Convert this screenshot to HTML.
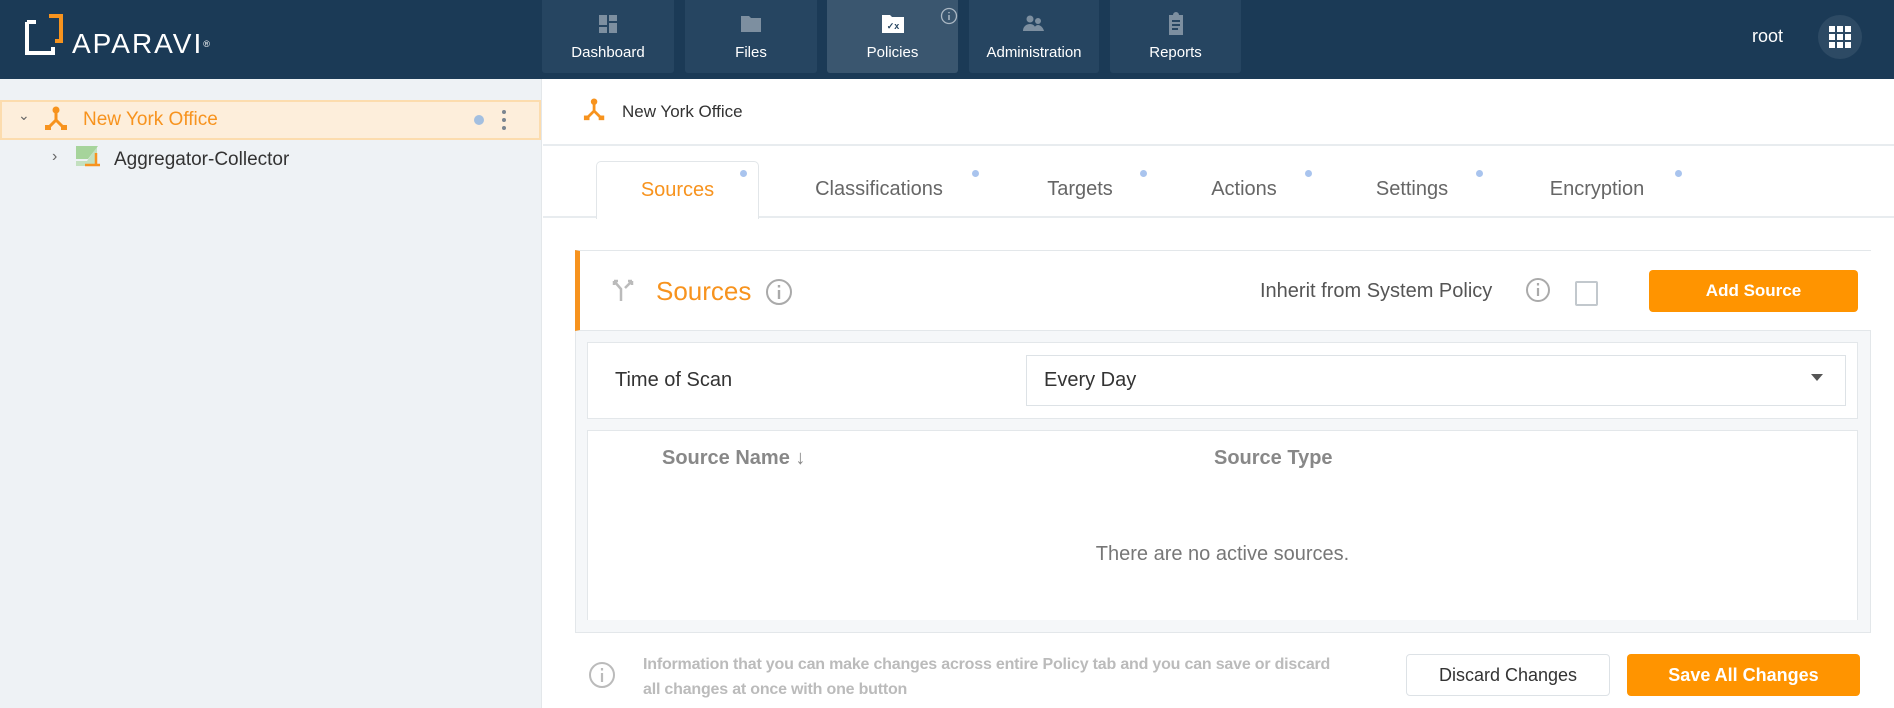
<!DOCTYPE html>
<html><head><meta charset="utf-8"><style>
*{box-sizing:border-box;margin:0;padding:0}
body{width:1894px;height:708px;overflow:hidden;font-family:"Liberation Sans",sans-serif;background:#fff;position:relative}
.a{position:absolute}
.hdr{left:0;top:0;width:1894px;height:79px;background:#1b3a56}
.nav{top:0;height:73px;background:#264561;border-radius:0 0 3px 3px;color:#fff;font-size:15px;text-align:center}
.nav span{position:absolute;left:0;right:0;top:44px}
.nav svg{position:absolute;left:50%;top:12px;margin-left:-12px}
.side{left:0;top:79px;width:542px;height:629px;background:#eef2f5;border-right:1px solid #e3e7ea}
.tab{top:161px;height:56px;font-size:20px;color:#666;text-align:center;line-height:56px}
.dot{width:7px;height:7px;border-radius:50%;background:#a9c4ee;top:170px}
.t{color:#555}
</style></head><body>
<div class="a hdr"></div>
<svg class="a" style="left:24px;top:14px" width="40" height="42" viewBox="0 0 40 42">
<path d="M3 8 V39 H29 V33" fill="none" stroke="#fff" stroke-width="4"/>
<path d="M3 8 H12" fill="none" stroke="#fff" stroke-width="4"/>
<path d="M25 2 H37 V27 H31" fill="none" stroke="#f7931e" stroke-width="4"/>
</svg>
<div class="a" style="left:72px;top:30px;color:#fff;font-size:28px;letter-spacing:2px;line-height:28px">APARAVI<sup style="font-size:9px;vertical-align:top;font-weight:normal">®</sup></div>

<div class="a nav" style="left:542px;width:132px"><svg width="24" height="24" viewBox="0 0 24 24"><path d="M3 3h8v10H3zM13 3h8v6h-8zM13 11h8v10h-8zM3 15h8v6H3z" fill="#7d8fa0"/></svg><span>Dashboard</span></div>
<div class="a nav" style="left:685px;width:132px"><svg width="24" height="24" viewBox="0 0 24 24"><path d="M2 4h8l2 2h10v14H2z" fill="#7d8fa0"/></svg><span>Files</span></div>
<div class="a nav" style="left:827px;width:131px;background:#3a566f"><svg width="24" height="24" viewBox="0 0 24 24"><path d="M1 3h8l2 2h12v16H1z" fill="#fff"/><text x="12" y="17" font-size="9" font-weight="bold" fill="#264561" text-anchor="middle" font-family="Liberation Sans">✓x</text></svg><span>Policies</span>
<svg class="a" style="left:113px;top:7px;margin:0" width="18" height="18" viewBox="0 0 18 18"><circle cx="9" cy="9" r="7.5" fill="none" stroke="#aab7c3" stroke-width="1.3"/><path d="M9 8v5M9 5v1.3" stroke="#aab7c3" stroke-width="1.5"/></svg></div>
<div class="a nav" style="left:969px;width:130px"><svg width="24" height="24" viewBox="0 0 24 24"><circle cx="8" cy="7" r="3.5" fill="#7d8fa0"/><circle cx="16" cy="9" r="3" fill="#7d8fa0"/><path d="M1 19c0-5 4-7 7-7s6 2 6 7zM11 19c1-4 3-6 5-6s5 2 6 6z" fill="#7d8fa0"/></svg><span>Administration</span></div>
<div class="a nav" style="left:1110px;width:131px"><svg width="24" height="24" viewBox="0 0 24 24"><path d="M5 3h4a3 3 0 0 1 6 0h4v20H5z" fill="#7d8fa0"/><path d="M8 9h8M8 13h8M8 17h6" stroke="#264561" stroke-width="2"/></svg><span>Reports</span></div>
<div class="a" style="left:1752px;top:26px;color:#fff;font-size:18px">root</div>
<div class="a" style="left:1818px;top:15px;width:44px;height:44px;border-radius:50%;background:#2d4a64"></div>
<svg class="a" style="left:1829px;top:26px" width="22" height="22" viewBox="0 0 22 22" fill="#fff"><rect x="0" y="0" width="6" height="6"/><rect x="8" y="0" width="6" height="6"/><rect x="16" y="0" width="6" height="6"/><rect x="0" y="8" width="6" height="6"/><rect x="8" y="8" width="6" height="6"/><rect x="16" y="8" width="6" height="6"/><rect x="0" y="16" width="6" height="6"/><rect x="8" y="16" width="6" height="6"/><rect x="16" y="16" width="6" height="6"/></svg>

<div class="a side"></div>
<div class="a" style="left:0;top:100px;width:541px;height:40px;background:#fdeedb;border:2px solid #fcdcae"></div>
<div class="a" style="left:18px;top:107px;color:#666;font-size:14px">⌄</div>
<svg class="a" style="left:44px;top:106px" width="26" height="26" viewBox="0 0 26 26"><circle cx="12" cy="4" r="3.5" fill="#f7931e"/><path d="M12 6v8L5 21M12 14l7 7" stroke="#f7931e" stroke-width="3" fill="none"/><rect x="1" y="19" width="6" height="5" fill="#f7931e"/><rect x="17" y="19" width="6" height="5" fill="#f7931e"/></svg>
<div class="a" style="left:83px;top:109px;color:#f7931e;font-size:19px">New York Office</div>
<div class="a" style="left:474px;top:115px;width:10px;height:10px;border-radius:50%;background:#a3bfe0"></div>
<div class="a" style="left:502px;top:110px;width:4px;height:4px;border-radius:50%;background:#7a8590;box-shadow:0 8px 0 #7a8590,0 16px 0 #7a8590"></div>
<div class="a" style="left:52px;top:148px;color:#666;font-size:16px">›</div>
<svg class="a" style="left:75px;top:145px" width="26" height="24" viewBox="0 0 26 24"><path d="M1 1h22L13 14H1z" fill="#a6d49b"/><path d="M1 16h11L22 2v19H1z" fill="#a6d49b" opacity=".6"/><path d="M10 20h15M21 8v12" stroke="#f7931e" stroke-width="2.5"/></svg>
<div class="a" style="left:114px;top:149px;color:#333;font-size:19px">Aggregator-Collector</div>

<svg class="a" style="left:583px;top:98px" width="24" height="24" viewBox="0 0 26 26"><circle cx="12" cy="4" r="3.5" fill="#f7931e"/><path d="M12 6v8L5 21M12 14l7 7" stroke="#f7931e" stroke-width="3" fill="none"/><rect x="1" y="19" width="6" height="5" fill="#f7931e"/><rect x="17" y="19" width="6" height="5" fill="#f7931e"/></svg>
<div class="a" style="left:622px;top:102px;color:#333;font-size:17px">New York Office</div>
<div class="a" style="left:543px;top:144px;width:1351px;height:2px;background:#e8ecef"></div>
<div class="a" style="left:543px;top:216px;width:1351px;height:2px;background:#e8ecef"></div>
<div class="a tab" style="left:596px;width:163px;background:#fff;border:1px solid #e2e6e9;border-bottom:none;border-radius:5px 5px 0 0;color:#f7931e;height:58px">Sources</div>
<div class="a tab" style="left:779px;width:200px">Classifications</div>
<div class="a tab" style="left:1000px;width:160px">Targets</div>
<div class="a tab" style="left:1164px;width:160px">Actions</div>
<div class="a tab" style="left:1332px;width:160px">Settings</div>
<div class="a tab" style="left:1507px;width:180px">Encryption</div>
<div class="a dot" style="left:740px"></div><div class="a dot" style="left:972px"></div><div class="a dot" style="left:1140px"></div><div class="a dot" style="left:1305px"></div><div class="a dot" style="left:1476px"></div><div class="a dot" style="left:1675px"></div>

<div class="a" style="left:575px;top:250px;width:1296px;height:383px;background:#f5f7f9;border:1px solid #e3e7ea"></div>
<div class="a" style="left:575px;top:250px;width:1296px;height:81px;background:#fff;border-left:5px solid #f7931e;border-bottom:1px solid #e3e7ea;border-top:1px solid #e3e7ea"></div>
<svg class="a" style="left:611px;top:278px" width="24" height="26" viewBox="0 0 24 26"><path d="M3 3l7 8v12M21 3l-7 7M3 3h4M3 3v4M21 3h-4M21 3v4" stroke="#bbb" stroke-width="2.5" fill="none"/></svg>
<div class="a" style="left:656px;top:276px;color:#f7931e;font-size:26px">Sources</div>
<svg class="a" style="left:765px;top:278px" width="28" height="28" viewBox="0 0 28 28"><circle cx="14" cy="14" r="12" fill="none" stroke="#aaa" stroke-width="2"/><path d="M14 12v9M14 7v2.5" stroke="#aaa" stroke-width="2.4"/></svg>
<div class="a t" style="left:1260px;top:280px;font-size:20px">Inherit from System Policy</div>
<svg class="a" style="left:1525px;top:276px" width="26" height="28" viewBox="0 0 26 28"><circle cx="13" cy="14" r="11" fill="none" stroke="#aaa" stroke-width="2"/><path d="M13 12v8M13 7v2.5" stroke="#aaa" stroke-width="2.2"/></svg>
<div class="a" style="left:1575px;top:281px;width:23px;height:25px;border:2px solid #c2c8cd;border-radius:2px"></div>
<div class="a" style="left:1649px;top:270px;width:209px;height:42px;background:#ff9400;border-radius:4px;color:#fff;font-size:17px;font-weight:bold;text-align:center;line-height:42px">Add Source</div>

<div class="a" style="left:587px;top:342px;width:1271px;height:77px;background:#fff;border:1px solid #e3e7ea"></div>
<div class="a" style="left:615px;top:369px;color:#333;font-size:20px">Time of Scan</div>
<div class="a" style="left:1026px;top:355px;width:820px;height:51px;border:1px solid #dde2e6"></div>
<div class="a" style="left:1044px;top:369px;color:#333;font-size:20px">Every Day</div>
<div class="a" style="left:1811px;top:374px;width:0;height:0;border-left:6px solid transparent;border-right:6px solid transparent;border-top:7px solid #555"></div>

<div class="a" style="left:587px;top:430px;width:1271px;height:190px;background:#fff;border:1px solid #e3e7ea;border-bottom:none"></div>
<div class="a" style="left:662px;top:447px;color:#888;font-size:20px;font-weight:bold">Source Name ↓</div>
<div class="a" style="left:1214px;top:447px;color:#888;font-size:20px;font-weight:bold">Source Type</div>
<div class="a" style="left:587px;top:543px;width:1271px;text-align:center;color:#777;font-size:20px">There are no active sources.</div>

<svg class="a" style="left:588px;top:660px" width="28" height="30" viewBox="0 0 28 30"><circle cx="14" cy="15" r="12" fill="none" stroke="#bbb" stroke-width="2"/><path d="M14 13v9M14 8v2.5" stroke="#bbb" stroke-width="2.2"/></svg>
<div class="a" style="left:643px;top:652px;color:#bbb;font-size:16px;font-weight:bold;line-height:25px;width:760px;letter-spacing:-0.2px">Information that you can make changes across entire Policy tab and you can save or discard<br>all changes at once with one button</div>
<div class="a" style="left:1406px;top:654px;width:204px;height:42px;border:1px solid #dde2e6;border-radius:4px;color:#333;font-size:18px;text-align:center;line-height:40px">Discard Changes</div>
<div class="a" style="left:1627px;top:654px;width:233px;height:42px;background:#ff9400;border-radius:4px;color:#fff;font-size:18px;font-weight:bold;text-align:center;line-height:42px">Save All Changes</div>
</body></html>
